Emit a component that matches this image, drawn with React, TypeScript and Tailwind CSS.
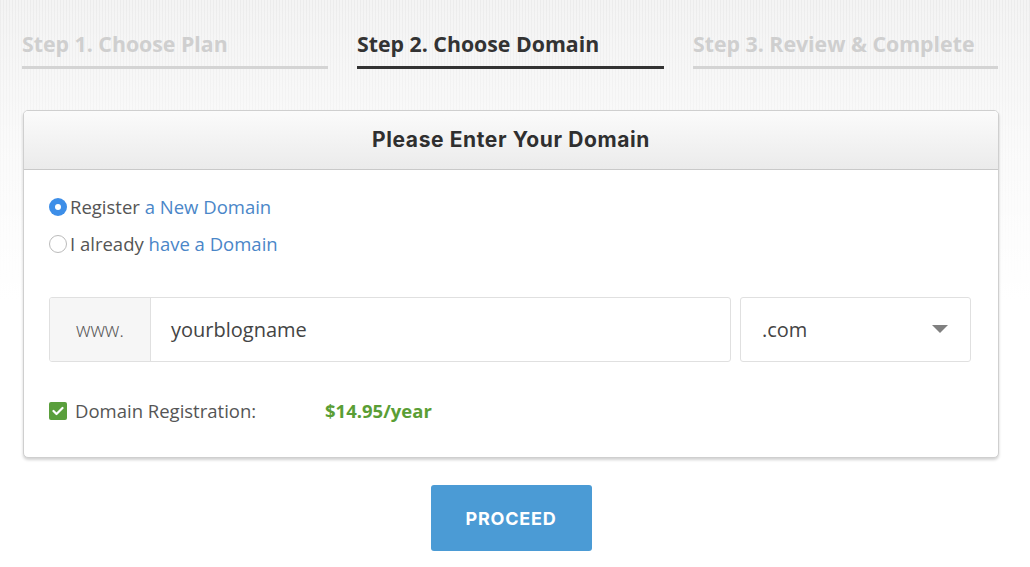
import React from "react";

export default function App() {
  return (
    <div
      className="w-[1030px] h-[567px] overflow-hidden bg-white relative"
      style={{ fontFamily: '"Open Sans", "Liberation Sans", sans-serif' }}
    >
      <div className="absolute inset-x-0 top-0 h-[300px] bg-[repeating-linear-gradient(90deg,#ececec_0px,#ececec_1px,#f4f4f4_1px,#f4f4f4_3px)]" />
      <div className="absolute inset-x-0 top-0 h-[300px] bg-gradient-to-b from-[rgba(255,255,255,0)] via-[rgba(255,255,255,0.6)] to-white" />
      <div className="relative">
        {/* Steps */}
        <div className="flex pl-[22px] pt-[29px] gap-[29px]">
          <div className="w-[306px] border-b-[3px] border-[#d4d4d4] pb-[7px]">
            <span className="text-[21.3px] font-bold text-[#cfcfcf] leading-[30px]">Step 1. Choose Plan</span>
          </div>
          <div className="w-[307px] border-b-[3px] border-[#333] pb-[7px]">
            <span className="text-[21.3px] font-bold text-[#333] leading-[30px]">Step 2. Choose Domain</span>
          </div>
          <div className="w-[305px] border-b-[3px] border-[#d4d4d4] pb-[7px]">
            <span className="text-[21.3px] font-bold text-[#cfcfcf] leading-[30px]">Step 3. Review &amp; Complete</span>
          </div>
        </div>

        {/* Card */}
        <div className="ml-[23px] mt-[41px] w-[976px] h-[348px] rounded-[5px] border border-[#cfcfcf] bg-white shadow-[0_2px_3px_rgba(0,0,0,0.18)] overflow-hidden">
          <div className="h-[59px] bg-gradient-to-b from-[#fbfbfb] to-[#ebebeb] border-b border-[#c9c9c9] flex items-center justify-center">
            <span
              className="text-[21px] font-bold text-[#2f2f2f] tracking-[0.6px]"
              style={{ fontFamily: 'Inter, "Liberation Sans", sans-serif' }}
            >
              Please Enter Your Domain
            </span>
          </div>
          <div className="pl-[25px] pr-[27px] pt-[24px]">
            <div className="flex items-center h-[26px] text-[18.5px] text-[#555]">
              <span className="w-[18px] h-[18px] rounded-full bg-[#3d8ee8] flex items-center justify-center mr-[3px]">
                <span className="w-[6px] h-[6px] rounded-full bg-white" />
              </span>
              <span>Register&nbsp;</span>
              <span className="text-[#4a86c8]">a New Domain</span>
            </div>
            <div className="flex items-center h-[26px] mt-[11px] text-[18.5px] text-[#555]">
              <span className="w-[18px] h-[18px] rounded-full border border-[#bbb] bg-white mr-[3px]" />
              <span>I already&nbsp;</span>
              <span className="text-[#4a86c8]">have a Domain</span>
            </div>

            <div className="flex mt-[40px] gap-[9px] h-[65px]">
              <div className="flex flex-1 border border-[#e0e0e0] rounded-[3px] overflow-hidden">
                <div className="w-[101px] bg-[#f6f6f6] border-r border-[#e0e0e0] flex items-center justify-center text-[20px] text-[#555] font-light">
                  www.
                </div>
                <div className="flex-1 flex items-center pl-[20px] text-[20px] text-[#444]">
                  yourblogname
                </div>
              </div>
              <div className="w-[231px] border border-[#e0e0e0] rounded-[3px] flex items-center justify-between pl-[21px] pr-[22px] text-[20px] text-[#444]">
                <span>.com</span>
                <svg width="16" height="9" viewBox="0 0 16 9">
                  <path d="M0 0 L16 0 L8 8 Z" fill="#808080" />
                </svg>
              </div>
            </div>

            <div className="flex items-center mt-[37px] h-[24px]">
              <span className="w-[18px] h-[18px] rounded-[2px] bg-[#5a9f3c] flex items-center justify-center">
                <svg width="12" height="10" viewBox="0 0 12 10">
                  <path d="M1.5 5 L4.5 8 L10.5 2" stroke="white" strokeWidth="2.2" fill="none" strokeLinecap="round" strokeLinejoin="round" />
                </svg>
              </span>
              <span className="ml-[8px] text-[18.5px] text-[#555] w-[250px]">Domain Registration:</span>
              <span className="text-[18.5px] font-bold text-[#5a9e35]">$14.95/year</span>
            </div>
          </div>
        </div>

        {/* Button */}
        <div className="ml-[23px] w-[976px] flex justify-center mt-[27px]">
          <button
            className="w-[161px] h-[66px] rounded-[3px] bg-[#4b9bd5] text-white text-[18px] font-bold tracking-[0.8px]"
            style={{ fontFamily: 'Inter, "Liberation Sans", sans-serif' }}
          >
            PROCEED
          </button>
        </div>
      </div>
    </div>
  );
}
